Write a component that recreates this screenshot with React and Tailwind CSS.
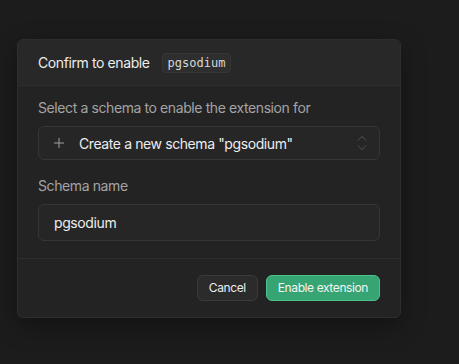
import { Plus, ChevronsUpDown } from 'lucide-react'

export default function App() {
  return (
    <div
      className="min-h-screen bg-[#1c1c1c] pt-[39px] pl-[17px] tracking-[-0.4px]"
      style={{ fontFamily: 'Inter, "Noto Sans", sans-serif' }}
    >
      <div className="w-[384px] rounded-md border border-[#2e2e2e] bg-[#232323] shadow-[0_8px_24px_rgba(0,0,0,0.35)] overflow-hidden">
        <div className="flex h-[46px] items-center gap-3 border-b border-[#2e2e2e] bg-[#282828] px-5">
          <span className="text-[14px] text-[#ededed]">Confirm to enable</span>
          <code
            className="rounded-[4px] border border-[#363636] bg-[#2e2e2e] px-[5px] py-[2px] text-[12px] leading-[14px] tracking-normal text-[#d8d8d8]"
            style={{ fontFamily: '"DejaVu Sans Mono", monospace' }}
          >
            pgsodium
          </code>
        </div>

        <div className="border-b border-[#2e2e2e] px-5 pt-[12px] pb-[17px]">
          <p className="text-[14px] leading-5 text-[#a3a3a3]">Select a schema to enable the extension for</p>
          <div className="mt-2 flex h-[34px] items-center rounded-md border border-[#363636] bg-[#262626] pl-3 pr-[7px]">
            <Plus size={16} strokeWidth={1.5} className="text-[#a0a0a0]" />
            <span className="ml-3 flex-1 text-[14px] text-[#ededed]">Create a new schema "pgsodium"</span>
            <ChevronsUpDown size={20} strokeWidth={1.25} className="text-[#444444]" />
          </div>

          <p className="mt-4 text-[14px] leading-5 text-[#a3a3a3]">Schema name</p>
          <div className="mt-2 flex h-[37px] items-center rounded-md border border-[#363636] bg-[#262626] pl-[15px]">
            <span className="text-[14px] text-[#ededed]">pgsodium</span>
          </div>
        </div>

        <div className="flex justify-end gap-2 px-5 py-4">
          <button className="h-[26px] rounded-md border border-[#3a3a3a] bg-[#2b2b2b] px-[11px] text-[12px] text-[#ededed]">
            Cancel
          </button>
          <button className="h-[26px] rounded-md border border-[#4cc38a] bg-[#37a473] px-[11px] text-[12px] text-[#f4f4f4]">
            Enable extension
          </button>
        </div>
      </div>
    </div>
  )
}
